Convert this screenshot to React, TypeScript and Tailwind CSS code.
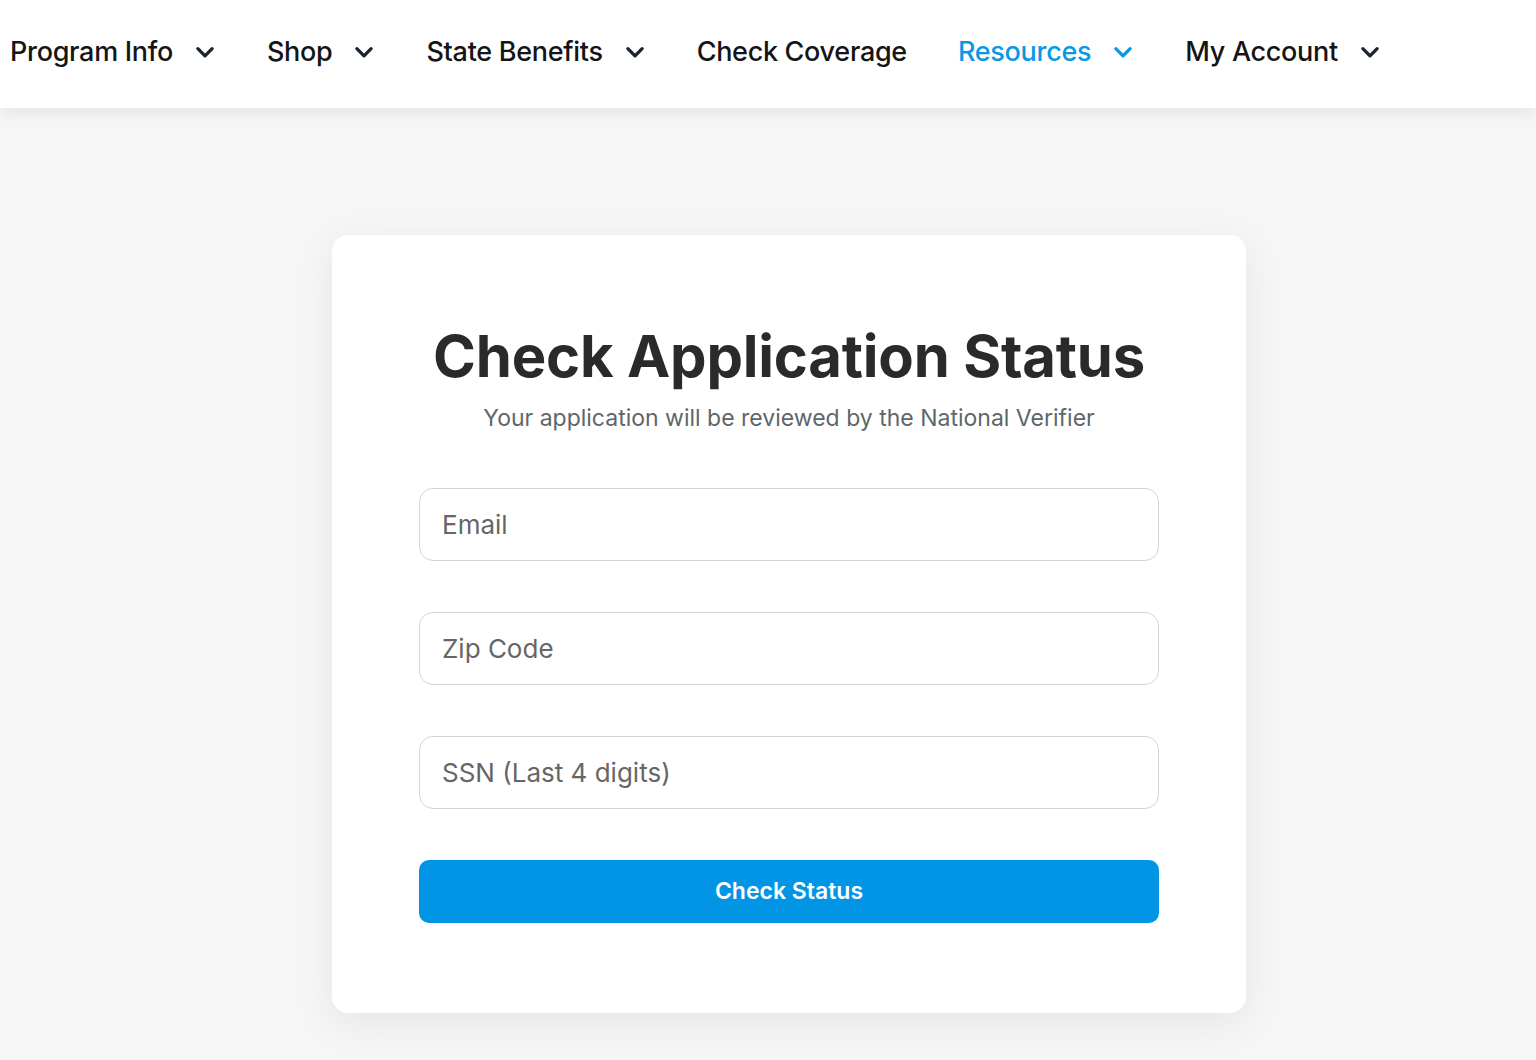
const navItems = [
  { label: 'Program Info', dropdown: true },
  { label: 'Shop', dropdown: true },
  { label: 'State Benefits', dropdown: true },
  { label: 'Check Coverage', dropdown: false },
  { label: 'Resources', dropdown: true, active: true },
  { label: 'My Account', dropdown: true },
];

function Chevron({ className }: { className: string }) {
  return (
    <svg viewBox="0 0 20 20" className={className} fill="none" stroke="currentColor" strokeWidth={3} strokeLinecap="round" strokeLinejoin="round">
      <polyline points="3.5,7 10,13.5 16.5,7" />
    </svg>
  );
}

export default function App() {
  return (
    <div className="min-h-[1060px] bg-[#f6f6f6] font-['Inter',sans-serif]">
      <header className="relative z-10 h-[108px] bg-white shadow-[0_4px_14px_rgba(0,0,0,0.08)]">
        <nav className="flex h-full items-center gap-[51px] pb-[4px] pl-[10px]">
          {navItems.map((item) => (
            <div key={item.label} className="flex items-center gap-[21px]">
              <span
                className={
                  item.active
                    ? 'text-[27px] font-medium tracking-[-0.3px] text-[#0a98e6]'
                    : 'text-[27px] font-medium tracking-[-0.3px] text-[#151515]'
                }
              >
                {item.label}
              </span>
              {item.dropdown && (
                <Chevron className={item.active ? 'h-[22px] w-[22px] text-[#0a98e6]' : 'h-[22px] w-[22px] text-[#1c2430]'} />
              )}
            </div>
          ))}
        </nav>
      </header>

      <main className="flex justify-center pt-[127px] pb-12">
        <div className="ml-[42px] w-[914px] rounded-2xl bg-white px-[87px] pt-[86px] pb-[90px] shadow-[0_10px_40px_rgba(0,0,0,0.07)]">
          <h1 className="text-center text-[58px] leading-[70px] font-bold tracking-[-0.2px] text-[#2a2a2a]">
            Check Application Status
          </h1>
          <p className="mt-[12px] text-center text-[23px] leading-[30px] text-[#5d676a]">
            Your application will be reviewed by the National Verifier
          </p>

          <form className="mt-[55px] flex flex-col gap-[51px]">
            {['Email', 'Zip Code', 'SSN (Last 4 digits)'].map((ph) => (
              <input
                key={ph}
                type="text"
                placeholder={ph}
                className="h-[73px] w-full rounded-[14px] border border-[#d4d4d4] bg-white px-[22px] text-[26px] text-[#333] placeholder:text-[#666] outline-none"
              />
            ))}
            <button
              type="button"
              className="h-[63px] w-full rounded-[10px] bg-[#0295e5] text-[23px] font-semibold text-white"
            >
              Check Status
            </button>
          </form>
        </div>
      </main>
    </div>
  );
}
